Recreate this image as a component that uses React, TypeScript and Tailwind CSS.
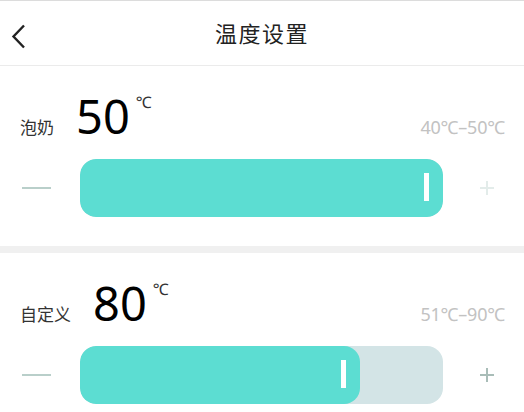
import React from "react";

const font = { fontFamily: '"Noto Sans", "Noto Sans CJK SC", sans-serif' };

function Slider({ pct }: { pct: number }) {
  return (
    <div className="relative h-[58px] w-[363px] rounded-[16px] bg-[#d3e4e6] overflow-hidden">
      <div
        className="relative h-full rounded-[16px] bg-[#5cddd2]"
        style={{ width: `${pct}%` }}
      >
        <div className="absolute right-[14px] top-[14px] h-[28px] w-[5px] bg-white" />
      </div>
    </div>
  );
}

function Section({
  label,
  value,
  range,
  pct,
  plusColor,
  gap,
}: {
  label: string;
  value: string;
  range: string;
  pct: number;
  plusColor: string;
  gap: string;
}) {
  return (
    <div className="pt-[25px] pb-[29px]">
      <div className="flex items-baseline pl-[20px] pr-[19px]">
        <span className="text-[17px] text-[#333]">{label}</span>
        <div className={`${gap} flex items-start`}>
          <span className="text-[47px] leading-[50px] text-black">{value}</span>
          <span className="ml-[6px] mt-[3px] text-[16px] leading-[16px] text-[#333]">℃</span>
        </div>
        <span className="ml-auto text-[18px] text-[#c2c2c2] tracking-[-0.2px]">{range}</span>
      </div>
      <div className="mt-[18px] flex items-center">
        <div className="flex w-[80px] justify-center">
          <div className="ml-[-7px] h-[2px] w-[29px] bg-[#b9cfca]" />
        </div>
        <Slider pct={pct} />
        <div className="relative ml-[37px] h-[14px] w-[14px]">
          <div className="absolute left-0 top-[6px] h-[2px] w-[14px]" style={{ background: plusColor }} />
          <div className="absolute left-[6px] top-0 h-[14px] w-[2px]" style={{ background: plusColor }} />
        </div>
      </div>
    </div>
  );
}

export default function App() {
  return (
    <div className="w-[524px] h-[412px] overflow-hidden bg-white" style={font}>
      <div className="relative flex h-[66px] items-center justify-center border-t border-b border-t-[#dcdcdc] border-b-[#ebebeb]">
        <svg className="absolute left-[10px] top-[22px]" width="18" height="28" viewBox="0 0 18 28">
          <polyline points="14,2.5 3.5,13.5 14,24.5" fill="none" stroke="#222" strokeWidth="2.4" />
        </svg>
        <span className="text-[22px] text-[#222] tracking-[1.5px]">温度设置</span>
      </div>
      <Section label="泡奶" value="50" range="40℃–50℃" pct={100} plusColor="#e3ecea" gap="ml-[22px]" />
      <div className="h-[7px] bg-[#f0f0f0]" />
      <Section label="自定义" value="80" range="51℃–90℃" pct={77} plusColor="#a9bdb8" gap="ml-[22px]" />
    </div>
  );
}
